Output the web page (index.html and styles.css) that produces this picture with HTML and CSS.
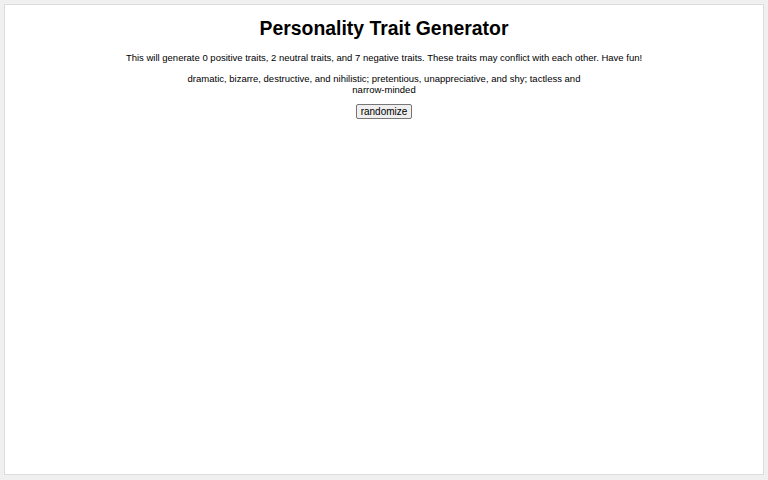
FILE: index.html
```html
<!DOCTYPE html>
<html>
<head>
<meta charset="utf-8">
<title>Personality Trait Generator</title>
<link rel="stylesheet" href="styles.css">
</head>
<body>
<div class="wrapper">
    <h1 class="title">Personality Trait Generator</h1>
    <p class="intro">This will generate 0 positive traits, 2 neutral traits, and 7 negative traits. These traits may conflict with each other. Have fun!</p>
    <p class="traits">dramatic, bizarre, destructive, and nihilistic; pretentious, unappreciative, and shy; tactless and narrow-minded</p>
    <div class="actions">
        <button class="randomize">randomize</button>
    </div>
</div>
</body>
</html>
```

FILE: styles.css
```css
html, body {
    height: 100%;
}

* {
    margin: 0;
    padding: 0;
    box-sizing: border-box;
}

body {
    background: #f0f0f0;
    padding: 4px 4px 5px 4px;
    font-family: 'Liberation Sans', Arial, sans-serif;
    color: #000;
}

.wrapper {
    height: 100%;
    background: #fff;
    border: 1px solid #dcdcdc;
    text-align: center;
    padding-top: 11px;
}

.wrapper .title {
    font-size: 19.4px;
    font-weight: bold;
    line-height: 24px;
}

.wrapper .intro {
    font-size: 9.5px;
    line-height: 12px;
    margin-top: 12px;
}

.wrapper .traits {
    font-size: 9.5px;
    line-height: 11px;
    margin: 9px auto 0;
    width: 400px;
}

.wrapper .actions {
    margin-top: 6px;
}

.wrapper .randomize {
    font-family: 'Liberation Sans', Arial, sans-serif;
    font-size: 10px;
    padding: 1px 4px;
    background: #efefef;
    border: 1px solid #767676;
    border-radius: 2px;
    cursor: pointer;
}
```
